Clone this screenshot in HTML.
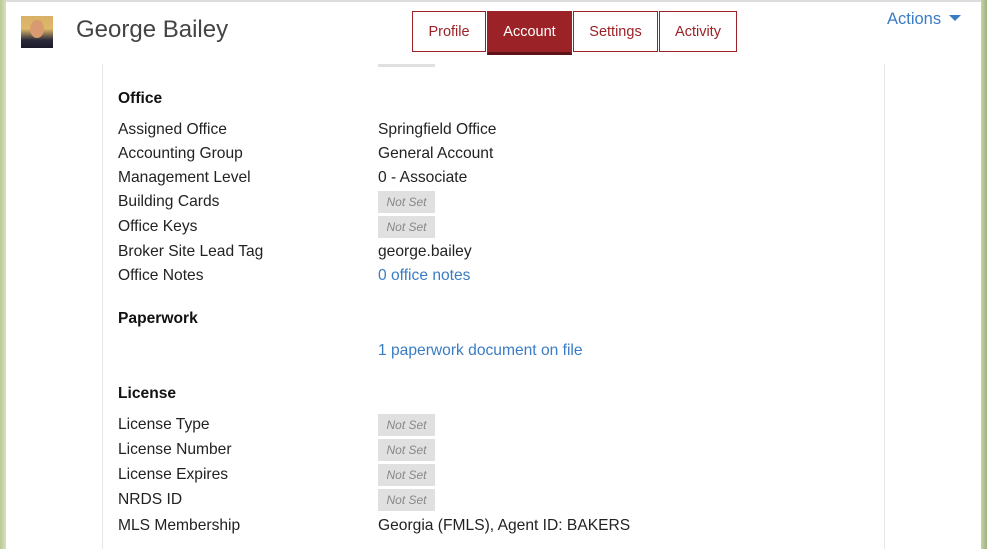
<!DOCTYPE html>
<html><head><style>
body{margin:0;width:987px;height:549px;overflow:hidden;background:linear-gradient(90deg,#b9c99a 0,#d6e0b8 6px,#fff 6px,#fff 981px,#c8d4a8 981px,#9eb080 100%);font-family:"Liberation Sans",sans-serif;position:relative}
.top{position:absolute;left:6px;right:6px;top:0;height:2px;background:#ddd}
.panel{position:absolute;left:6px;right:6px;top:2px;bottom:0;background:#fff}
.avatar{position:absolute;left:21px;top:16px;width:32px;height:32px;background:linear-gradient(180deg,#d8b068 0,#e0b868 40%,#2a2a3a 75%,#1a1a2a 100%)}
.face{position:absolute;left:30px;top:20px;width:14px;height:18px;border-radius:50%;background:#d89a70}
.name{position:absolute;left:76px;top:16px;font-size:24px;color:#444}
.tab{position:absolute;top:11px;height:41px;border:1px solid #9b2226;box-sizing:border-box;color:#9b2226;font-size:14.5px;line-height:40px;text-align:center;background:#fff}
.tab.act{background:#9b2226;color:#fff;border-bottom:3px solid #5e1416;height:44px}
.actions{position:absolute;left:887px;top:10px;color:#3a7cc4;font-size:16.5px}
.actions:after{content:"";display:inline-block;margin-left:8px;vertical-align:3px;border-left:6px solid transparent;border-right:6px solid transparent;border-top:6px solid #3a7cc4}
.vl{position:absolute;top:64px;bottom:0;width:1px;background:#e6e6e6}
.bar{position:absolute;left:378px;top:64px;width:57px;height:3px;background:#e0e0e0}
.t{position:absolute;font-size:15.6px;color:#222;white-space:nowrap}
.h{font-weight:bold;color:#111}
.v{left:378px}
.l{left:118px}
.a{color:#3a7cc4}
.ns{position:absolute;left:378px;width:57px;height:22px;background:#e0e0e0;color:#888;font-style:italic;font-size:12px;text-align:center;line-height:22px}
</style></head><body>
<div class="panel"></div><div class="top"></div>
<div class="avatar"></div><div class="face"></div>
<div class="name">George Bailey</div>
<div class="tab" style="left:412px;width:74px">Profile</div>
<div class="tab act" style="left:487px;width:85px">Account</div>
<div class="tab" style="left:573px;width:85px">Settings</div>
<div class="tab" style="left:659px;width:78px">Activity</div>
<div class="actions">Actions</div>
<div class="vl" style="left:102px"></div><div class="vl" style="left:884px"></div>
<div class="bar"></div>
<div class="t l h" style="top:90px">Office</div>
<div class="t l" style="top:121px">Assigned Office</div><div class="t v" style="top:121px">Springfield Office</div>
<div class="t l" style="top:145px">Accounting Group</div><div class="t v" style="top:145px">General Account</div>
<div class="t l" style="top:169px">Management Level</div><div class="t v" style="top:169px">0 - Associate</div>
<div class="t l" style="top:193px">Building Cards</div><div class="ns" style="top:191px">Not Set</div>
<div class="t l" style="top:218px">Office Keys</div><div class="ns" style="top:216px">Not Set</div>
<div class="t l" style="top:243px">Broker Site Lead Tag</div><div class="t v" style="top:243px">george.bailey</div>
<div class="t l" style="top:267px">Office Notes</div><div class="t v a" style="top:267px">0 office notes</div>
<div class="t l h" style="top:310px">Paperwork</div>
<div class="t v a" style="top:342px">1 paperwork document on file</div>
<div class="t l h" style="top:385px">License</div>
<div class="t l" style="top:416px">License Type</div><div class="ns" style="top:414px">Not Set</div>
<div class="t l" style="top:441px">License Number</div><div class="ns" style="top:439px">Not Set</div>
<div class="t l" style="top:466px">License Expires</div><div class="ns" style="top:464px">Not Set</div>
<div class="t l" style="top:491px">NRDS ID</div><div class="ns" style="top:489px">Not Set</div>
<div class="t l" style="top:517px">MLS Membership</div><div class="t v" style="top:517px">Georgia (FMLS), Agent ID: BAKERS</div>
</body></html>
